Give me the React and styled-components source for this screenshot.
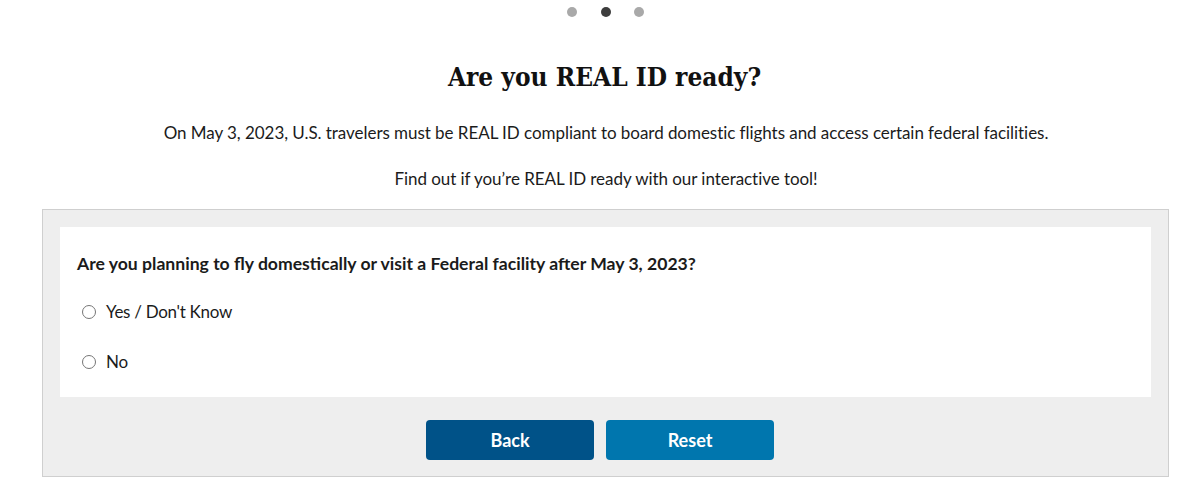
import React from "react";
import styled, { createGlobalStyle } from "styled-components";

const Global = createGlobalStyle`
  html, body { margin: 0; padding: 0; background: #fff; }
  body { font-family: "Lato", "Open Sans", sans-serif; color: #1b1b1b; }
  * { box-sizing: border-box; }
`;

const Page = styled.div`
  width: 1200px;
  height: 494px;
  overflow: hidden;
`;

const Dots = styled.div`
  display: flex;
  justify-content: center;
  gap: 23.5px;
  padding-top: 7px;
  padding-left: 11px;
`;

const Dot = styled.span`
  width: 10px;
  height: 10px;
  border-radius: 50%;
  background: ${(p) => (p.$active ? "#3d3d3d" : "#a9a9a9")};
`;

const Title = styled.h1`
  margin: 40px 0 0;
  text-align: center;
  font-family: "DejaVu Serif Condensed", "DejaVu Serif", serif;
  font-weight: 700;
  font-size: 26px;
  line-height: 40px;
  color: #111;
  padding-left: 9px;
`;

const Lead = styled.p`
  margin: ${(p) => p.$mt} 0 0;
  text-align: center;
  font-size: 17px;
  letter-spacing: -0.05px;
  line-height: 26px;
  padding-left: 12px;
`;

const Panel = styled.section`
  margin: 17px 0 0 42px;
  width: 1127px;
  background: #eeeeee;
  border: 1px solid #cfcfcf;
  padding: 17px 17px 16px;
`;

const Card = styled.div`
  background: #fff;
  height: 170px;
  padding: 24px 17px 0;
`;

const Question = styled.h2`
  margin: 0;
  font-size: 17.6px;
  font-weight: 700;
  line-height: 26px;
`;

const Options = styled.div`
  display: flex;
  flex-direction: column;
  gap: 24px;
  margin-top: 22px;
`;

const Option = styled.label`
  display: flex;
  align-items: center;
  gap: 10px;
  padding-left: 5px;
  font-size: 17px;
  letter-spacing: -0.3px;
  line-height: 26px;
`;

const Radio = styled.span`
  width: 14px;
  height: 14px;
  border-radius: 50%;
  border: 1px solid #767676;
  background: #fff;
`;

const Actions = styled.div`
  display: flex;
  justify-content: center;
  gap: 12px;
  margin-top: 23px;
  padding-right: 11px;
`;

const Button = styled.button`
  width: 168px;
  height: 40px;
  border: none;
  border-radius: 4px;
  background: ${(p) => (p.$primary ? "#005288" : "#0076ae")};
  color: #fff;
  font-family: "Lato", "Open Sans", sans-serif;
  font-weight: 700;
  font-size: 18px;
  cursor: pointer;
`;

export default function App() {
  return (
    <Page>
      <Global />
      <Dots>
        <Dot />
        <Dot $active />
        <Dot />
      </Dots>
      <Title>Are you REAL ID ready?</Title>
      <Lead $mt="23px">
        On May 3, 2023, U.S. travelers must be REAL ID compliant to board domestic flights and access certain federal facilities.
      </Lead>
      <Lead $mt="20px">Find out if you’re REAL ID ready with our interactive tool!</Lead>
      <Panel>
        <Card>
          <Question>Are you planning to fly domestically or visit a Federal facility after May 3, 2023?</Question>
          <Options>
            <Option>
              <Radio />
              Yes / Don't Know
            </Option>
            <Option>
              <Radio />
              No
            </Option>
          </Options>
        </Card>
        <Actions>
          <Button $primary>Back</Button>
          <Button>Reset</Button>
        </Actions>
      </Panel>
    </Page>
  );
}
